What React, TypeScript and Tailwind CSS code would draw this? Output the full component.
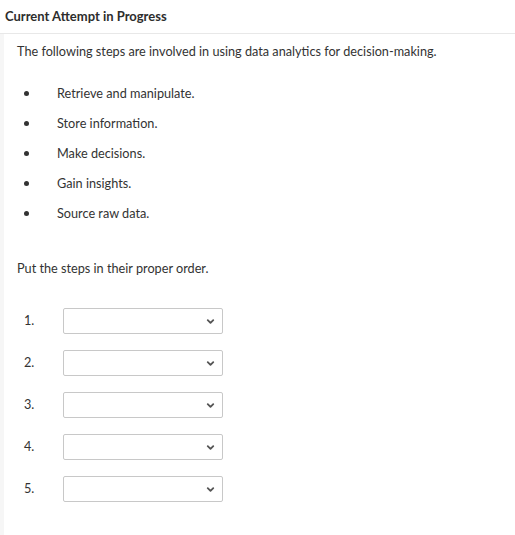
import { ChevronDown } from 'lucide-react';

const steps = [
  'Retrieve and manipulate.',
  'Store information.',
  'Make decisions.',
  'Gain insights.',
  'Source raw data.',
];

export default function App() {
  return (
    <div className="w-[515px] h-[535px] bg-white text-[#333] text-[12.7px] overflow-hidden" style={{ fontFamily: 'Lato, "Liberation Sans", sans-serif' }}>
      <div className="h-[34px] pl-[5px] flex items-center border-b border-[#e8e8e8]">
        <span className="font-bold text-[13px] leading-none text-[#2d2d2d] -mt-[1px]">Current Attempt in Progress</span>
      </div>
      <div className="flex h-[501px]">
        <div className="w-[4px] bg-[#f6f6f6]" />
        <div className="flex-1 pl-[13px] pt-[8px]">
          <p className="leading-[18px]">The following steps are involved in using data analytics for decision-making.</p>
          <ul className="mt-[18px]">
            {steps.map((s) => (
              <li key={s} className="flex items-center h-[30px] leading-[18px]">
                <span className="w-[5px] h-[5px] rounded-full bg-[#333] ml-[7px] mr-[28px]" />
                <span>{s}</span>
              </li>
            ))}
          </ul>
          <p className="mt-[31px] leading-[18px]">Put the steps in their proper order.</p>
          <div className="mt-[31px] flex flex-col gap-[16px]">
            {[1, 2, 3, 4, 5].map((n) => (
              <div key={n} className="flex items-center">
                <span className="w-[46px] pl-[7px]">{n}.</span>
                <div className="w-[160px] h-[26px] border border-[#c8c8c8] rounded-[2px] flex items-center justify-end pr-[6px] bg-white">
                  <ChevronDown className="w-[11px] h-[11px] text-[#555]" strokeWidth={4} />
                </div>
              </div>
            ))}
          </div>
        </div>
      </div>
    </div>
  );
}
